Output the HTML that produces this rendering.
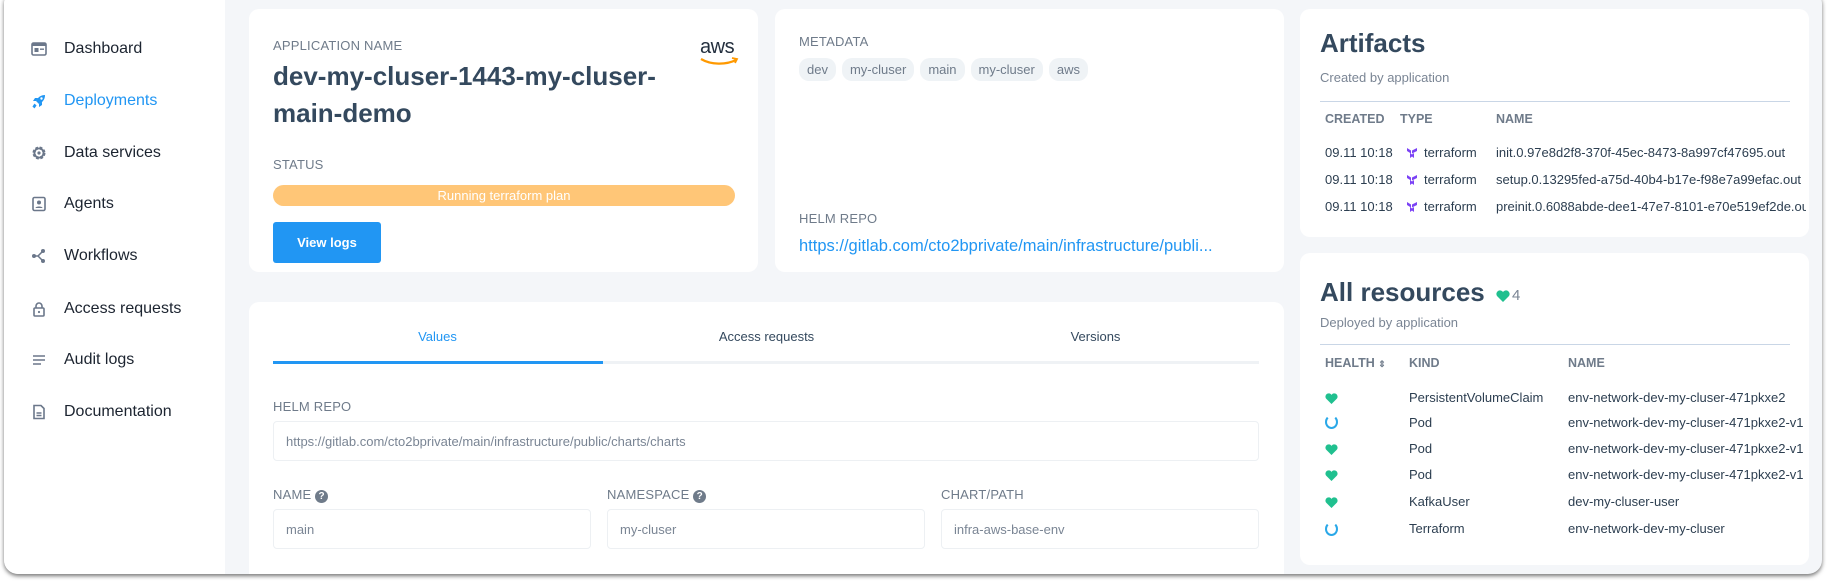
<!DOCTYPE html>
<html><head><meta charset="utf-8"><style>
*{box-sizing:border-box;margin:0;padding:0}
body{width:1835px;height:582px;background:#fff;font-family:"Liberation Sans",sans-serif;position:relative;overflow:hidden;color:#2c3e50}
.frame{position:absolute;left:4px;top:-10px;width:1818px;height:584px;border-radius:14px;background:#f4f6f9;box-shadow:0 2px 4px rgba(0,0,0,.55);overflow:hidden}
.side{position:absolute;left:0;top:0;width:221px;height:100%;background:#fff}
.nav{position:absolute;left:27px;font-size:16px;color:#1c2430;display:flex;align-items:center;height:20px}
.nav svg{width:16px;height:16px;margin-right:17px}
.nav.active{color:#2196f3}
.card{position:absolute;background:#fff;border-radius:10px}
.a{position:absolute;white-space:nowrap}
.lbl{font-size:13px;color:#6f7b8a;letter-spacing:.2px}
.tag{display:inline-block;background:#eff3f6;color:#6f7b8a;border-radius:10px;font-size:13px;padding:4px 8px;margin-right:6px}
.inp{position:absolute;border:1px solid #edf0f3;border-radius:4px;height:40px;font-size:13px;color:#7a8594;padding:12px 12px}
.th{font-size:12.5px;font-weight:bold;color:#6f7b8a}
.td{font-size:13px;color:#2c3e50}
.tf{display:inline-block;width:12px;height:12px;vertical-align:-2px;margin-right:6px}
</style></head><body>
<div class="frame">
<div class="side">
<div class="nav" style="top:49px"><svg viewBox="0 0 16 16"><rect x="1" y="2" width="14" height="12" rx="1.5" fill="none" stroke="#6b778a" stroke-width="1.6"/><rect x="1" y="2" width="14" height="3" fill="#6b778a"/><rect x="3.5" y="7" width="4" height="4" fill="#6b778a"/><rect x="9" y="7.5" width="4" height="1.4" fill="#6b778a"/></svg>Dashboard</div>
<div class="nav active" style="top:101px"><svg viewBox="0 0 16 16"><path d="M14 2c-4 0-7 2-9 6l3 3c4-2 6-5 6-9z" fill="#2196f3"/><path d="M5 8l-3 0 2-3 3 0zM8 11l0 3 3-2 0-3z" fill="#2196f3"/><path d="M4 11l-2 3M5 12l-2 3" stroke="#2196f3" stroke-width="1.4"/><circle cx="10.5" cy="5.5" r="1.2" fill="#fff"/></svg>Deployments</div>
<div class="nav" style="top:153px"><svg viewBox="0 0 16 16"><circle cx="8" cy="8" r="5" fill="none" stroke="#6b778a" stroke-width="3" stroke-dasharray="2.5 1.5"/><circle cx="8" cy="8" r="4.6" fill="none" stroke="#6b778a" stroke-width="1.8"/><circle cx="8" cy="8" r="1.6" fill="#6b778a"/></svg>Data services</div>
<div class="nav" style="top:204px"><svg viewBox="0 0 16 16"><rect x="2" y="1.5" width="12" height="13" rx="1.5" fill="none" stroke="#6b778a" stroke-width="1.6"/><circle cx="8" cy="6.5" r="2" fill="#6b778a"/><path d="M4.5 12c0-2 7-2 7 0z" fill="#6b778a"/></svg>Agents</div>
<div class="nav" style="top:256px"><svg viewBox="0 0 16 16"><circle cx="3" cy="8" r="2" fill="#6b778a"/><circle cx="12" cy="3" r="2" fill="#6b778a"/><circle cx="12" cy="13" r="2" fill="#6b778a"/><path d="M3 8h4l5-5M7 8l5 5" stroke="#6b778a" stroke-width="1.5" fill="none"/></svg>Workflows</div>
<div class="nav" style="top:309px"><svg viewBox="0 0 16 16"><rect x="3" y="7" width="10" height="8" rx="1" fill="none" stroke="#6b778a" stroke-width="1.6"/><path d="M5 7V5a3 3 0 016 0v2" fill="none" stroke="#6b778a" stroke-width="1.6"/><circle cx="8" cy="11" r="1.1" fill="#6b778a"/></svg>Access requests</div>
<div class="nav" style="top:360px"><svg viewBox="0 0 16 16"><path d="M2 4h12M2 8h12M2 12h8" stroke="#6b778a" stroke-width="1.6"/></svg>Audit logs</div>
<div class="nav" style="top:412px"><svg viewBox="0 0 16 16"><path d="M3 1.5h7l3 3v10H3z" fill="none" stroke="#6b778a" stroke-width="1.6"/><path d="M5.5 9h5M5.5 11.5h5" stroke="#6b778a" stroke-width="1.4"/></svg>Documentation</div>
</div>

<div class="card" style="left:245px;top:19px;width:509px;height:263px">
<div class="a lbl" style="left:24px;top:29px">APPLICATION NAME</div>
<div class="a" style="left:24px;top:49px;font-size:26px;font-weight:bold;line-height:37px;color:#34495e;white-space:normal;width:400px">dev-my-cluser-1443-my-cluser-main-demo</div>
<div class="a" style="left:451px;top:27px;font-size:20px;color:#232f3e;letter-spacing:-.5px">aws</div>
<svg class="a" style="left:451px;top:48px" width="40" height="10" viewBox="0 0 40 10"><path d="M1 2c10 6 25 6 35 1" stroke="#f90" stroke-width="2.2" fill="none"/><path d="M32 1l5 1-2 4" stroke="#f90" stroke-width="1.8" fill="none"/></svg>
<div class="a lbl" style="left:24px;top:148px">STATUS</div>
<div class="a" style="left:24px;top:176px;width:462px;height:21px;border-radius:11px;background:#ffc677;color:#fff;font-size:13px;text-align:center;line-height:21px">Running terraform plan</div>
<div class="a" style="left:24px;top:213px;width:108px;height:41px;border-radius:3px;background:#2196f3;color:#fff;font-size:13px;font-weight:bold;text-align:center;line-height:41px">View logs</div>
</div>

<div class="card" style="left:771px;top:19px;width:509px;height:263px">
<div class="a lbl" style="left:24px;top:25px">METADATA</div>
<div class="a" style="left:24px;top:49px"><span class="tag">dev</span><span class="tag">my-cluser</span><span class="tag">main</span><span class="tag">my-cluser</span><span class="tag">aws</span></div>
<div class="a lbl" style="left:24px;top:202px">HELM REPO</div>
<div class="a" style="left:24px;top:228px;font-size:16.5px;color:#2196f3">https://gitlab.com/cto2bprivate/main/infrastructure/publi...</div>
</div>

<div class="card" style="left:245px;top:312px;width:1035px;height:300px">
<div class="a" style="left:24px;top:27px;width:329px;text-align:center;font-size:13px;color:#2196f3">Values</div>
<div class="a" style="left:353px;top:27px;width:329px;text-align:center;font-size:13px;color:#34495e">Access requests</div>
<div class="a" style="left:682px;top:27px;width:329px;text-align:center;font-size:13px;color:#34495e">Versions</div>
<div class="a" style="left:24px;top:59px;width:986px;height:3px;background:#eff2f5"></div>
<div class="a" style="left:24px;top:59px;width:330px;height:3px;background:#2196f3"></div>
<div class="a lbl" style="left:24px;top:97px">HELM REPO</div>
<div class="inp" style="left:24px;top:119px;width:986px">https://gitlab.com/cto2bprivate/main/infrastructure/public/charts/charts</div>
<div class="a lbl" style="left:24px;top:185px">NAME <span style="display:inline-block;width:13px;height:13px;border-radius:50%;background:#6f7b8a;color:#fff;font-size:10px;text-align:center;line-height:13px;font-weight:bold">?</span></div>
<div class="a lbl" style="left:358px;top:185px">NAMESPACE <span style="display:inline-block;width:13px;height:13px;border-radius:50%;background:#6f7b8a;color:#fff;font-size:10px;text-align:center;line-height:13px;font-weight:bold">?</span></div>
<div class="a lbl" style="left:692px;top:185px">CHART/PATH</div>
<div class="inp" style="left:24px;top:207px;width:318px">main</div>
<div class="inp" style="left:358px;top:207px;width:318px">my-cluser</div>
<div class="inp" style="left:692px;top:207px;width:318px">infra-aws-base-env</div>
</div>

<div class="card" style="left:1296px;top:19px;width:509px;height:228px">
<div class="a" style="left:20px;top:19px;font-size:26px;font-weight:bold;color:#34495e">Artifacts</div>
<div class="a" style="left:20px;top:61px;font-size:13px;color:#7a8594">Created by application</div>
<div class="a" style="left:20px;top:92px;width:470px;height:1px;background:#c9d6e6"></div>
<div class="a th" style="left:25px;top:103px">CREATED</div>
<div class="a th" style="left:100px;top:103px">TYPE</div>
<div class="a th" style="left:196px;top:103px">NAME</div>
<div class="a td" style="left:25px;top:136px">09.11 10:18</div><div class="a td" style="left:106px;top:136px"><svg class="tf" viewBox="0 0 12 12"><path d="M1 1l4 2.5v3L1 4zM6 3.5L11 1v3L6 6.5zM4 6l2 1.5 2-1.5v5L6 9.5 4 11z" fill="#7b42f5"/></svg>terraform</div><div class="a td" style="left:196px;top:136px">init.0.97e8d2f8-370f-45ec-8473-8a997cf47695.out</div>
<div class="a td" style="left:25px;top:163px">09.11 10:18</div><div class="a td" style="left:106px;top:163px"><svg class="tf" viewBox="0 0 12 12"><path d="M1 1l4 2.5v3L1 4zM6 3.5L11 1v3L6 6.5zM4 6l2 1.5 2-1.5v5L6 9.5 4 11z" fill="#7b42f5"/></svg>terraform</div><div class="a td" style="left:196px;top:163px">setup.0.13295fed-a75d-40b4-b17e-f98e7a99efac.out</div>
<div class="a td" style="left:25px;top:190px">09.11 10:18</div><div class="a td" style="left:106px;top:190px"><svg class="tf" viewBox="0 0 12 12"><path d="M1 1l4 2.5v3L1 4zM6 3.5L11 1v3L6 6.5zM4 6l2 1.5 2-1.5v5L6 9.5 4 11z" fill="#7b42f5"/></svg>terraform</div><div class="a td" style="left:196px;top:190px;width:310px;overflow:hidden">preinit.0.6088abde-dee1-47e7-8101-e70e519ef2de.out</div>
</div>

<div class="card" style="left:1296px;top:263px;width:509px;height:312px">
<div class="a" style="left:20px;top:24px;font-size:26px;font-weight:bold;color:#34495e">All resources</div>
<svg class="a" style="left:196px;top:37px" width="14" height="12" viewBox="0 0 14 12"><path d="M7 12L1 6a3.3 3.3 0 016-4 3.3 3.3 0 016 4z" fill="#20c08f"/></svg>
<div class="a" style="left:212px;top:34px;font-size:15px;color:#7a8594">4</div>
<div class="a" style="left:20px;top:62px;font-size:13px;color:#7a8594">Deployed by application</div>
<div class="a" style="left:20px;top:91px;width:470px;height:1px;background:#c9d6e6"></div>
<div class="a th" style="left:25px;top:103px">HEALTH <span style="font-size:9px">&#8661;</span></div>
<div class="a th" style="left:109px;top:103px">KIND</div>
<div class="a th" style="left:268px;top:103px">NAME</div>
<div class="a" style="left:25px;top:138px"><svg width="13" height="11" viewBox="0 0 14 12"><path d="M7 12L1 6a3.3 3.3 0 016-4 3.3 3.3 0 016 4z" fill="#20c08f"/></svg></div><div class="a td" style="left:109px;top:137px">PersistentVolumeClaim</div><div class="a td" style="left:268px;top:137px">env-network-dev-my-cluser-471pkxe2</div>
<div class="a" style="left:25px;top:162px;width:13px;height:14px;border:2px solid #2aa8e8;border-radius:50%;border-top-color:#fff0"></div><div class="a td" style="left:109px;top:162px">Pod</div><div class="a td" style="left:268px;top:162px;width:240px;overflow:hidden">env-network-dev-my-cluser-471pkxe2-v1</div>
<div class="a" style="left:25px;top:189px"><svg width="13" height="11" viewBox="0 0 14 12"><path d="M7 12L1 6a3.3 3.3 0 016-4 3.3 3.3 0 016 4z" fill="#20c08f"/></svg></div><div class="a td" style="left:109px;top:188px">Pod</div><div class="a td" style="left:268px;top:188px;width:240px;overflow:hidden">env-network-dev-my-cluser-471pkxe2-v1</div>
<div class="a" style="left:25px;top:215px"><svg width="13" height="11" viewBox="0 0 14 12"><path d="M7 12L1 6a3.3 3.3 0 016-4 3.3 3.3 0 016 4z" fill="#20c08f"/></svg></div><div class="a td" style="left:109px;top:214px">Pod</div><div class="a td" style="left:268px;top:214px;width:240px;overflow:hidden">env-network-dev-my-cluser-471pkxe2-v1</div>
<div class="a" style="left:25px;top:242px"><svg width="13" height="11" viewBox="0 0 14 12"><path d="M7 12L1 6a3.3 3.3 0 016-4 3.3 3.3 0 016 4z" fill="#20c08f"/></svg></div><div class="a td" style="left:109px;top:241px">KafkaUser</div><div class="a td" style="left:268px;top:241px">dev-my-cluser-user</div>
<div class="a" style="left:25px;top:269px;width:13px;height:14px;border:2px solid #2aa8e8;border-radius:50%;border-top-color:#fff0"></div><div class="a td" style="left:109px;top:268px">Terraform</div><div class="a td" style="left:268px;top:268px">env-network-dev-my-cluser</div>
</div>
</div>
</body></html>
